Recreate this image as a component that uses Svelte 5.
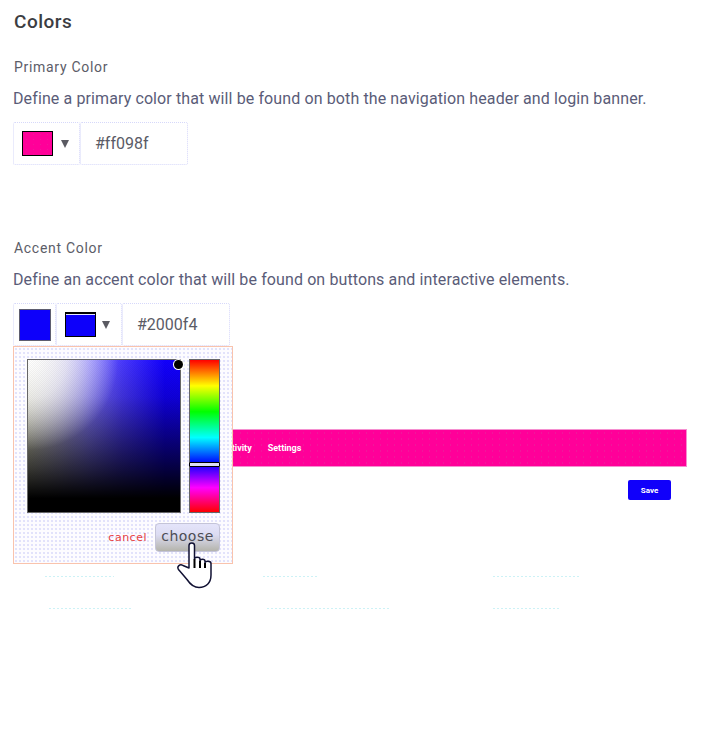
<script>
  const previewLinks = ['Activity', 'Settings'];
  const faintRows = [
    [{ x: 31, w: 70 }, { x: 249, w: 56 }, { x: 479, w: 88 }],
    [{ x: 35, w: 84 }, { x: 253, w: 124 }, { x: 479, w: 68 }]
  ];
</script>

<div class="page">
  <h2>Colors</h2>

  <section class="primary">
    <h3>Primary Color</h3>
    <p>Define a primary color that will be found on both the navigation header and login banner.</p>
    <div class="controls">
      <div class="box picker">
        <span class="swatch pink"></span>
        <span class="caret"></span>
      </div>
      <div class="box hex">#ff098f</div>
    </div>
  </section>

  <section class="accent">
    <h3>Accent Color</h3>
    <p>Define an accent color that will be found on buttons and interactive elements.</p>
    <div class="controls">
      <div class="box current"><span class="big-swatch"></span></div>
      <div class="box picker accent-picker">
        <span class="swatch blue"></span>
        <span class="caret"></span>
      </div>
      <div class="box hex">#2000f4</div>
    </div>

    <div class="popup">
      <div class="pick-row">
        <div class="sv"><span class="sv-dot"></span></div>
        <div class="hue"><span class="hue-handle"></span></div>
      </div>
      <div class="actions">
        <span class="cancel">cancel</span>
        <button type="button">choose</button>
      </div>
      <svg class="cursor" viewBox="0 0 40 50" width="40" height="50" aria-hidden="true">
        <path d="M12 29V6.500C12 3 17.500 3 17.500 6.500V20C17.500 17.500 23 17.500 23 20V22C23 19.500 28 19.500 28 22V24C28 21.500 34 21.500 34 24.500V36C34 44 29 48.500 22 48.500C16 48.500 13 45 10 40.500L1.500 30.500C-0.500 27.500 3 24.500 6 26.500Z" fill="#fff" stroke="#111133" stroke-width="1.500" stroke-linejoin="round"/>
        <path d="M17.500 20V29M23 22V29M28 24V29" stroke="#000" stroke-width="2" fill="none"/>
      </svg>
    </div>
  </section>

  <section class="preview">
    <div class="banner">
      {#each previewLinks as link}
        <span>{link}</span>
      {/each}
    </div>
    <div class="save-row"><span class="save">Save</span></div>
    <div class="faint">
      {#each faintRows as row}
        <div class="faint-row">
          {#each row as item}
            <i style="left:{item.x}px;width:{item.w}px"></i>
          {/each}
        </div>
      {/each}
    </div>
  </section>
</div>

<style>
  :global(body) {
    margin: 0;
    background: #fff;
  }

  .page {
    box-sizing: border-box;
    width: 704px;
    height: 753px;
    padding: 11px 17px 0 13px;
    overflow: hidden;
    font-family: Roboto, "Liberation Sans", sans-serif;
    color: #55566a;
  }

  h2 {
    margin: 0 0 0 1px;
    font-size: 19px;
    line-height: 21px;
    font-weight: 500;
    letter-spacing: 0.5px;
    color: #3c3d42;
  }

  h3 {
    margin: 0 0 0 1px;
    font-size: 14px;
    line-height: 16px;
    font-weight: 400;
    letter-spacing: 0.7px;
    color: #5c5d68;
  }

  p {
    margin: 14px 0 0;
    font-size: 16px;
    line-height: 19px;
    letter-spacing: 0.11px;
    color: #5a5c78;
  }

  .primary {
    margin-top: 27px;
  }

  .accent {
    position: relative;
    margin-top: 75px;
  }

  .controls {
    display: flex;
    margin-top: 14px;
  }

  .box {
    box-sizing: border-box;
    height: 43px;
    display: flex;
    align-items: center;
    border: 1px dotted #d6d8fa;
    border-radius: 2px;
    background: #fff;
  }

  .picker {
    width: 67px;
    padding-left: 8px;
    gap: 8px;
  }

  .accent-picker {
    width: 66px;
    gap: 6px;
  }

  .swatch {
    box-sizing: border-box;
    width: 31px;
    height: 25px;
    border: 1px solid #000;
  }

  .pink {
    background-color: #ff0099;
    background-image: radial-gradient(circle, #f0189a 0.7px, transparent 1px);
    background-size: 7px 5px;
  }

  .blue {
    background: #0d00fa;
    border-top: 2px solid #000;
    box-shadow: inset 0 1px 0 #e8e8ff;
  }

  .caret {
    width: 0;
    height: 0;
    border-left: 4px solid transparent;
    border-right: 4px solid transparent;
    border-top: 8px solid #5a5a62;
  }

  .hex {
    width: 108px;
    padding-left: 14px;
    font-size: 16px;
    color: #5a5b66;
  }

  .current {
    width: 43px;
    justify-content: center;
  }

  .big-swatch {
    box-sizing: border-box;
    width: 32px;
    height: 32px;
    border: 1px solid #5e5e70;
    background: #0d00fa;
  }

  .popup {
    position: absolute;
    left: 0;
    top: 106px;
    z-index: 2;
    box-sizing: border-box;
    width: 220px;
    height: 218px;
    padding: 12px 12px 0 13px;
    border: 1px solid #f9c3ad;
    background-color: #fdfcff;
    background-image: radial-gradient(circle, #e2e2fb 0.7px, transparent 1px);
    background-size: 4px 4px;
  }

  .pick-row {
    display: flex;
    justify-content: space-between;
  }

  .sv {
    position: relative;
    box-sizing: border-box;
    width: 154px;
    height: 154px;
    border: 1px solid #666;
    background:
      repeating-conic-gradient(rgba(0, 0, 0, 0.04) 0 25%, transparent 0 50%) 0 0 / 2px 2px,
      radial-gradient(circle at 0 0, #fff 0, rgba(255, 255, 255, 0.7) 18%, rgba(255, 255, 255, 0) 42%),
      linear-gradient(to top, #000 9%, rgba(0, 0, 0, 0.75) 28%, rgba(0, 0, 0, 0.45) 52%, rgba(0, 0, 0, 0.15) 76%, rgba(0, 0, 0, 0) 100%),
      linear-gradient(to right, rgba(130, 130, 50, 0.3), transparent 40%),
      linear-gradient(to right, #fff, #a49cff 28%, #4a3aff 62%, #1200ff 90%);
  }

  .sv-dot {
    position: absolute;
    top: 0;
    right: -3px;
    box-sizing: border-box;
    width: 9px;
    height: 9px;
    border-radius: 50%;
    background: #000;
    box-shadow: 0 0 0 1px #fff;
  }

  .hue {
    position: relative;
    box-sizing: border-box;
    width: 31px;
    height: 154px;
    border: 1px solid #666;
    background: linear-gradient(
      to bottom,
      #f00 0%,
      #ff0 17%,
      #0f0 34%,
      #0ff 51%,
      #00f 68%,
      #f0f 84%,
      #f00 100%
    );
  }

  .hue-handle {
    position: absolute;
    left: -1px;
    right: -1px;
    top: 102px;
    height: 5px;
    box-sizing: border-box;
    border: 1px solid #000;
    border-radius: 1px;
    background: #dcdcf5;
  }

  .actions {
    display: flex;
    justify-content: flex-end;
    align-items: center;
    gap: 8px;
    margin-top: 10px;
  }

  .cancel {
    font-family: "DejaVu Sans", sans-serif;
    font-size: 11px;
    letter-spacing: 0.5px;
    color: #e8413f;
  }

  button {
    box-sizing: border-box;
    width: 65px;
    height: 29px;
    padding: 0 0 3px;
    border: 1px solid #c4c4d8;
    border-radius: 4px;
    font-family: "DejaVu Sans", sans-serif;
    font-size: 14px;
    letter-spacing: 0.5px;
    color: #4c4c55;
    background: linear-gradient(to bottom, #e4e4fa 0%, #dcdcf2 40%, #b4b4ac 100%);
  }

  .cursor {
    position: absolute;
    left: 163px;
    top: 192px;
  }

  .preview {
    margin-top: 83px;
  }

  .banner {
    box-sizing: border-box;
    height: 38px;
    display: flex;
    align-items: center;
    gap: 16px;
    padding-left: 208px;
    border: 1px solid #f58fd0;
    border-left: 0;
    font-size: 9px;
    font-weight: 700;
    color: #fff;
    background-color: #ff0099;
    background-image: radial-gradient(circle, #f0189a 0.7px, transparent 1px);
    background-size: 7px 6px;
  }

  .save-row {
    display: flex;
    justify-content: flex-end;
    margin-top: 13px;
    padding-right: 16px;
  }

  .save {
    width: 43px;
    height: 20px;
    display: flex;
    align-items: center;
    justify-content: center;
    border-radius: 2px;
    font-size: 8px;
    font-weight: 700;
    color: #fff;
    background: #1000fa;
  }

  .faint {
    margin-top: 76px;
  }

  .faint-row {
    position: relative;
    height: 32px;
  }

  .faint-row i {
    position: absolute;
    top: 0;
    height: 1px;
    background-image: radial-gradient(circle, #cdf2f6 0.6px, transparent 0.9px);
    background-size: 4px 1px;
  }
</style>
